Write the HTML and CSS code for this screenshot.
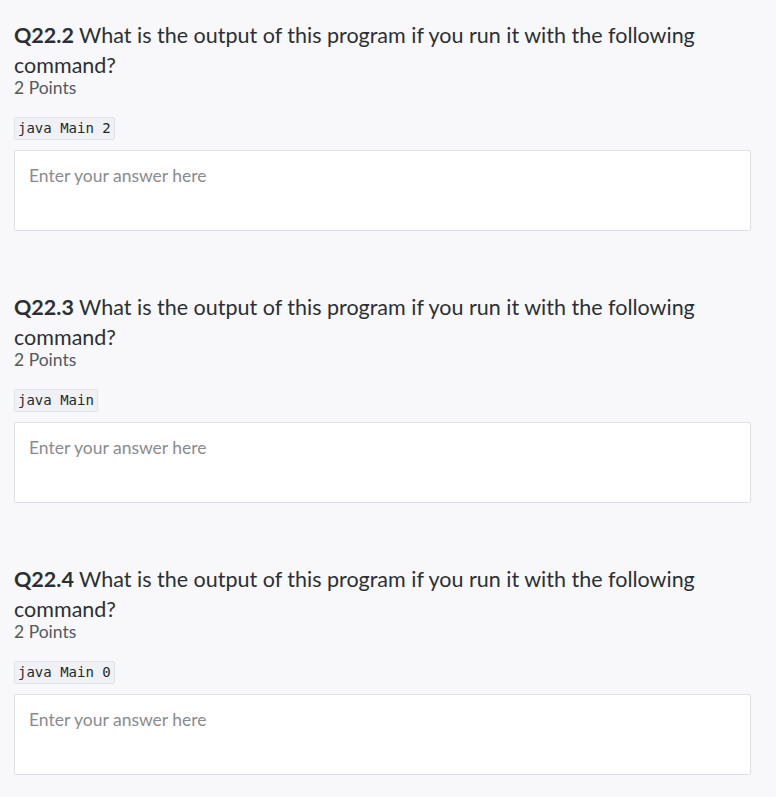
FILE: index.html
```html
<!DOCTYPE html>
<html lang="en">
<head>
    <meta charset="UTF-8">
    <meta name="viewport" content="width=device-width, initial-scale=1.0">
    <title>Questions</title>
    <link rel="stylesheet" href="styles.css">
</head>
<body>

<div class="questions">
    <!-- Q22.2 -->
    <section class="question">
        <h2 class="question-title"><strong>Q22.2</strong> What is the output of this program if you run it with the following command?</h2>
        <div class="points">2 Points</div>
        <code class="command">java Main 2</code>
        <textarea class="answer" placeholder="Enter your answer here"></textarea>
    </section>

    <!-- Q22.3 -->
    <section class="question">
        <h2 class="question-title"><strong>Q22.3</strong> What is the output of this program if you run it with the following command?</h2>
        <div class="points">2 Points</div>
        <code class="command">java Main</code>
        <textarea class="answer" placeholder="Enter your answer here"></textarea>
    </section>

    <!-- Q22.4 -->
    <section class="question">
        <h2 class="question-title"><strong>Q22.4</strong> What is the output of this program if you run it with the following command?</h2>
        <div class="points">2 Points</div>
        <code class="command">java Main 0</code>
        <textarea class="answer" placeholder="Enter your answer here"></textarea>
    </section>
</div>

</body>
</html>
```

FILE: styles.css
```css
/* General Reset */
* {
    margin: 0;
    padding: 0;
    box-sizing: border-box;
}

/* Body */
body {
    font-family: 'Lato', 'Noto Sans', sans-serif;
    background-color: #f8f8fa;
    color: #2b3034;
    padding: 20px 25px 0 14px;
}

/* Question list */
.questions {
    display: flex;
    flex-direction: column;
    gap: 61px;
}

.question {
    display: flex;
    flex-direction: column;
    align-items: flex-start;
}

/* Title */
.question-title {
    font-size: 21.5px;
    font-weight: normal;
    line-height: 30px;
}

.question-title strong {
    font-weight: bold;
}

.points {
    font-size: 17.5px;
    line-height: 20px;
    color: #555a5e;
    margin-top: -2px;
}

/* Command snippet */
.command {
    font-family: 'DejaVu Sans Mono', monospace;
    font-size: 14px;
    line-height: 21px;
    color: #24292e;
    background-color: #eff1f4;
    border: 1px solid #e0e3e8;
    border-radius: 2px;
    padding: 0 3px;
    margin-top: 19px;
}

/* Answer box */
.answer {
    display: block;
    width: 100%;
    height: 81px;
    margin-top: 10px;
    padding: 15px 14px;
    font-family: 'Lato', 'Noto Sans', sans-serif;
    font-size: 17.5px;
    line-height: 20px;
    color: #2b3034;
    background-color: #fff;
    border: 1px solid #dfdfe5;
    border-radius: 2px;
    resize: none;
}

.answer::placeholder {
    color: #8b8b8f;
}
```
